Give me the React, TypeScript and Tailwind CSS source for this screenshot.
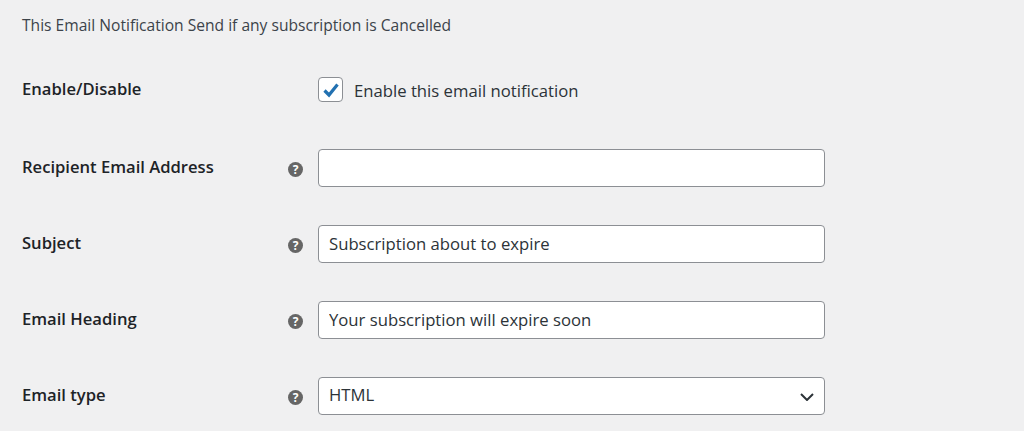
const fieldRows = [
  { label: 'Recipient Email Address', value: '' },
  { label: 'Subject', value: 'Subscription about to expire' },
  { label: 'Email Heading', value: 'Your subscription will expire soon' },
];

const fieldClass =
  'h-[38px] w-[507px] rounded-[4px] border border-[#8c8f94] bg-white px-[10px] pb-[2px] text-[16.7px] text-[#2c3338] outline-none';

function HelpIcon() {
  return (
    <span className="mt-[3px] flex h-[15px] w-[15px] items-center justify-center rounded-full bg-[#666666] text-[12px] leading-none font-bold text-white">
      ?
    </span>
  );
}

function Label({ children, className }: { children: string; className?: string }) {
  return (
    <span className={`w-[288px] pl-[22px] text-[16.6px] font-semibold text-[#1d2327] ${className ?? ''}`}>
      {children}
    </span>
  );
}

export default function App() {
  return (
    <div className="h-[431px] w-[1024px] overflow-hidden bg-[#f0f0f1] font-['Open_Sans','Noto_Sans',sans-serif] text-[#2c3338]">
      <p className="pt-[14px] pl-[22px] text-[15.6px] leading-[22px] text-[#3c434a]">
        This Email Notification Send if any subscription is Cancelled
      </p>

      <div className="mt-[41px] flex h-[25px] items-center">
        <Label>Enable/Disable</Label>
        <div className="ml-[30px] flex items-center">
          <span className="flex h-[25px] w-[25px] items-center justify-center rounded-[4px] border border-[#8c8f94] bg-white">
            <svg viewBox="0 0 20 20" className="h-[20px] w-[20px]" fill="none">
              <path d="M3.5 10.5 L8 15 L16.5 4.5" stroke="#2271b1" strokeWidth="3.2" />
            </svg>
          </span>
          <span className="mt-[2px] ml-[11px] text-[16.7px] text-[#2c3338]">Enable this email notification</span>
        </div>
      </div>

      <div className="mt-[47px] flex flex-col gap-[38px]">
        {fieldRows.map((row) => (
          <div key={row.label} className="flex items-center">
            <Label className="pb-[2px]">{row.label}</Label>
            <div className="flex w-[30px] justify-start">
              <HelpIcon />
            </div>
            <input readOnly value={row.value} className={fieldClass} />
          </div>
        ))}
        <div className="flex items-center">
          <Label className="pb-[2px]">Email type</Label>
          <div className="flex w-[30px] justify-start">
            <HelpIcon />
          </div>
          <div className="relative">
            <select className={`${fieldClass} appearance-none`} defaultValue="html">
              <option value="html">HTML</option>
            </select>
            <svg
              viewBox="0 0 14 8"
              className="pointer-events-none absolute top-[16px] right-[11px] h-[8px] w-[14px]"
              fill="none"
            >
              <path d="M1 1 L7 7 L13 1" stroke="#2c3338" strokeWidth="2" />
            </svg>
          </div>
        </div>
      </div>
    </div>
  );
}
